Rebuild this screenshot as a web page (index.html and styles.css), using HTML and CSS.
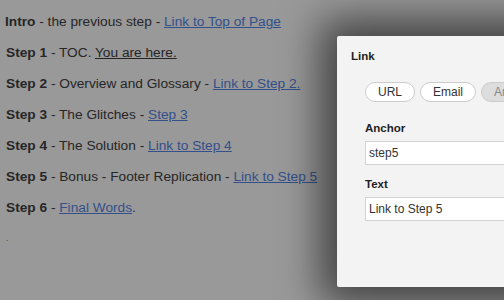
FILE: index.html
```html
<!DOCTYPE html>
<html lang="en">
<head>
    <meta charset="UTF-8">
    <title>Steps</title>
    <link rel="stylesheet" href="styles.css">
</head>
<body>
    <div class="page">
        <p class="intro"><b>Intro</b> - the previous step - <a href="#">Link to Top of Page</a></p>
        <p><b>Step 1</b> - TOC. <span class="here">You are here.</span></p>
        <p><b>Step 2</b> - Overview and Glossary - <a href="#">Link to Step 2.</a></p>
        <p><b>Step 3</b> - The Glitches - <a href="#">Step 3</a></p>
        <p><b>Step 4</b> - The Solution - <a href="#">Link to Step 4</a></p>
        <p><b>Step 5</b> - Bonus - Footer Replication - <a href="#">Link to Step 5</a></p>
        <p><b>Step 6</b> - <a href="#">Final Words</a>.</p>
        <p class="dot">.</p>
    </div>

    <!-- link dialog -->
    <div class="dialog">
        <div class="dialog-title">Link</div>
        <div class="dialog-body">
            <div class="tabs">
                <span class="tab">URL</span>
                <span class="tab">Email</span>
                <span class="tab active">Anchor</span>
            </div>
            <label class="field-label">Anchor</label>
            <div class="field">step5</div>
            <label class="field-label">Text</label>
            <div class="field">Link to Step 5</div>
        </div>
    </div>
</body>
</html>
```

FILE: styles.css
```css
:root {
    --overlay-bg: #999;
    --text: #262626;
    --link: #34508a;
    --dialog-bg: #f3f3f3;
}

html, body {
    margin: 0;
    height: 100%;
    overflow: hidden;
}

body {
    background-color: var(--overlay-bg);
    font-family: "Liberation Sans", Arial, sans-serif;
    color: var(--text);
    position: relative;
}

.page {
    padding: 6px 0 0 6px;
    font-size: 13.7px;
}

.page p {
    margin: 0;
    line-height: 31px;
    white-space: nowrap;
}

.page .intro {
    margin-left: -1px;
}

.page a {
    color: var(--link);
}

.here {
    text-decoration: underline;
}

.dot {
    font-size: 8px;
}

.dialog {
    position: absolute;
    left: 337px;
    top: 36px;
    width: 220px;
    height: 251px;
    background-color: var(--dialog-bg);
    border-radius: 2px;
    box-shadow: 0 0 40px 16px rgba(0,0,0,0.58);
    color: #222;
}

.dialog-title {
    font-size: 11.5px;
    font-weight: bold;
    padding: 14px 0 0 14px;
}

.dialog-body {
    padding: 20px 0 0 28px;
}

.tabs {
    display: flex;
    gap: 5px;
    margin-bottom: 20px;
}

.tab {
    display: inline-block;
    height: 18px;
    line-height: 18px;
    padding: 0 12px;
    border: 1px solid #ccc;
    border-radius: 10px;
    background: #fff;
    font-size: 12px;
    color: #333;
}

.tab.active {
    background: #ddd;
    color: #888;
}

.field-label {
    display: block;
    font-size: 11.5px;
    font-weight: bold;
    margin-bottom: 7px;
}

.field {
    height: 22px;
    line-height: 22px;
    border: 1px solid #d2d2d2;
    background: #fff;
    padding-left: 3px;
    font-size: 12px;
    color: #333;
    margin-bottom: 13px;
}
```
